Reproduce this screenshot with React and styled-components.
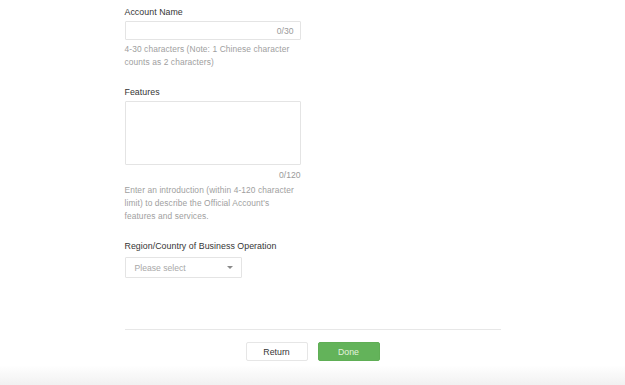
import styled, { createGlobalStyle } from 'styled-components';

const GlobalStyle = createGlobalStyle`
  html, body {
    margin: 0;
    padding: 0;
    background: #ffffff;
    font-family: "Liberation Sans", Helvetica, Arial, sans-serif;
  }
  * { box-sizing: border-box; }
`;

const Page = styled.div`
  width: 625px;
  height: 385px;
  display: flex;
  flex-direction: column;
  overflow: hidden;
  background: #fff;
`;

const Form = styled.div`
  width: 376px;
  margin: 0 auto;
  padding-top: 6px;
  flex: 1;
  display: flex;
  flex-direction: column;
`;

const Field = styled.div`
  display: flex;
  flex-direction: column;
  margin-bottom: ${p => p.$gap || 0}px;
`;

const Label = styled.label`
  font-size: 8.8px;
  line-height: 13px;
  color: #353535;
  margin-bottom: 2px;
  letter-spacing: 0.05px;
`;

const InputBox = styled.div`
  width: 176px;
  height: 19px;
  border: 1px solid #e4e4e4;
  border-radius: 1px;
  display: flex;
  align-items: center;
  justify-content: flex-end;
  padding: 0 6px;
`;

const Counter = styled.span`
  font-size: 8.6px;
  color: #9a9a9a;
`;

const TextArea = styled.div`
  width: 176px;
  height: 64px;
  border: 1px solid #e4e4e4;
  border-radius: 1px;
`;

const OuterCounter = styled.div`
  width: 176px;
  text-align: right;
  font-size: 8.6px;
  line-height: 12px;
  color: #9a9a9a;
  margin-top: 4px;
`;

const Hint = styled.p`
  margin: 3px 0 0;
  width: 174px;
  font-size: 8.4px;
  line-height: 13px;
  letter-spacing: 0.1px;
  color: #a0a0a0;
`;

const Select = styled.div`
  width: 117px;
  height: 21px;
  margin-top: 2px;
  border: 1px solid #e4e4e4;
  border-radius: 1px;
  display: flex;
  align-items: center;
  justify-content: space-between;
  padding: 0 8px 0 9px;
  font-size: 8.6px;
  color: #a8a8a8;
`;

const Caret = styled.span`
  width: 0;
  height: 0;
  border-left: 3px solid transparent;
  border-right: 3px solid transparent;
  border-top: 3px solid #8a8a8a;
`;

const Divider = styled.div`
  margin-top: 51px;
  height: 1px;
  background: #e7e7e7;
`;

const Actions = styled.div`
  display: flex;
  justify-content: center;
  gap: 10px;
  margin-top: 12px;
`;

const Button = styled.button`
  width: 62px;
  height: 19px;
  border-radius: 2px;
  font-family: inherit;
  font-size: 8.8px;
  padding: 0;
  cursor: pointer;
  border: 1px solid ${p => (p.$primary ? '#5fae55' : '#e6e6e6')};
  background: ${p => (p.$primary ? '#63b35a' : '#ffffff')};
  color: ${p => (p.$primary ? '#e3f2df' : '#353535')};
`;

const Footer = styled.div`
  height: 20px;
  background: linear-gradient(to bottom, #ffffff 0%, #f7f7f7 60%, #f1f1f1 100%);
`;

export default function App() {
  return (
    <Page>
      <GlobalStyle />
      <Form>
        <Field $gap={17}>
          <Label>Account Name</Label>
          <InputBox>
            <Counter>0/30</Counter>
          </InputBox>
          <Hint>4-30 characters (Note: 1 Chinese character counts as 2 characters)</Hint>
        </Field>

        <Field $gap={17}>
          <Label>Features</Label>
          <TextArea />
          <OuterCounter>0/120</OuterCounter>
          <Hint>
            Enter an introduction (within 4-120 character limit) to describe the Official Account's features and services.
          </Hint>
        </Field>

        <Field>
          <Label>Region/Country of Business Operation</Label>
          <Select>
            Please select
            <Caret />
          </Select>
        </Field>

        <Divider />
        <Actions>
          <Button>Return</Button>
          <Button $primary>Done</Button>
        </Actions>
      </Form>
      <Footer />
    </Page>
  );
}
